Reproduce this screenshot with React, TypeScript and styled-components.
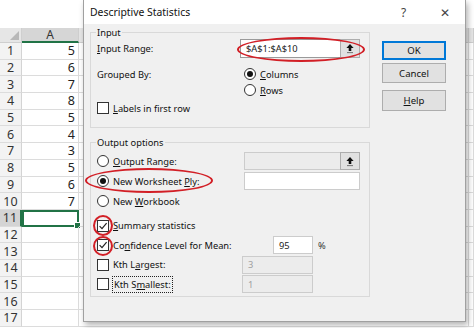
import React from 'react';
import styled, { createGlobalStyle, css } from 'styled-components';

const GlobalStyle = createGlobalStyle`
  html, body { margin: 0; padding: 0; background: #fff; }
  body { font-family: "Noto Sans", "Liberation Sans", sans-serif; }
`;

const GREEN = '#217346';
const RED = '#d21f26';

const Page = styled.div`
  position: relative;
  width: 474px;
  height: 328px;
  overflow: hidden;
  background: #fff;
`;

/* ---------- spreadsheet behind the dialog ---------- */

const Sheet = styled.div`
  padding-top: 28px;
  display: grid;
  grid-template-columns: 22px 57px 390px 1fr;
  grid-template-rows: 15px;
  grid-auto-rows: 16.7px;
  font-size: 12.5px;
  color: #222;
`;

const Corner = styled.div`
  position: relative;
  background: #e6e6e6;
  border-right: 1px solid #cfcfcf;
  border-bottom: 1px solid #cfcfcf;
  box-sizing: border-box;
  &::after {
    content: '';
    position: absolute;
    right: 2px;
    bottom: 2px;
    border-left: 9px solid transparent;
    border-bottom: 9px solid #b8b8b8;
  }
`;

const ColHead = styled.div<{ $active?: boolean }>`
  box-sizing: border-box;
  display: flex;
  align-items: center;
  justify-content: center;
  background: ${(p) => (p.$active ? '#d6d6d6' : '#e6e6e6')};
  border-right: 1px solid #cfcfcf;
  border-bottom: ${(p) => (p.$active ? `2px solid ${GREEN}` : '1px solid #cfcfcf')};
  color: #333;
  font-size: 12px;
`;

const RowHead = styled.div<{ $active?: boolean }>`
  box-sizing: border-box;
  display: flex;
  align-items: center;
  justify-content: center;
  background: ${(p) => (p.$active ? '#d4d4d4' : '#f3f3f3')};
  border-right: ${(p) => (p.$active ? `2px solid ${GREEN}` : '1px solid #d4d4d4')};
  border-bottom: 1px solid #dcdcdc;
  color: #333;
`;

const Cell = styled.div<{ $selected?: boolean }>`
  position: relative;
  box-sizing: border-box;
  display: flex;
  align-items: center;
  justify-content: flex-end;
  padding-right: 3px;
  border-right: 1px solid #dcdcdc;
  border-bottom: 1px solid #dcdcdc;
  ${(p) =>
    p.$selected &&
    css`
      outline: 2px solid ${GREEN};
      outline-offset: -2px;
      &::after {
        content: '';
        position: absolute;
        right: -3px;
        bottom: -3px;
        width: 5px;
        height: 5px;
        background: ${GREEN};
        border: 1px solid #fff;
      }
    `}
`;

/* ---------- dialog ---------- */

const Dialog = styled.div`
  position: absolute;
  left: 83px;
  top: 0;
  width: 383px;
  height: 322px;
  box-sizing: border-box;
  display: flex;
  flex-direction: column;
  background: #f0f0f0;
  border: 1px solid #a0a0a0;
  border-top: 0;
  box-shadow: 2px 3px 6px rgba(0, 0, 0, 0.3);
  font-size: 9.3px;
  color: #111;
`;

const TitleBar = styled.div`
  height: 24px;
  flex: none;
  display: flex;
  align-items: center;
  background: #fff;
  padding-left: 6px;
`;

const Title = styled.span`
  flex: 1;
  font-size: 10.4px;
  color: #111;
`;

const TitleButton = styled.span`
  width: 41px;
  text-align: center;
  font-size: 12px;
  color: #444;
`;

const Body = styled.div`
  flex: 1;
  display: flex;
  gap: 12px;
  padding: 8px 0 0 6px;
`;

const Groups = styled.div`
  width: 280px;
  display: flex;
  flex-direction: column;
  gap: 14px;
`;

const GroupBox = styled.div<{ $height: number }>`
  position: relative;
  box-sizing: border-box;
  height: ${(p) => p.$height}px;
  border: 1px solid #d9d9d9;
  display: flex;
  flex-direction: column;
`;

const Legend = styled.span`
  position: absolute;
  top: -7px;
  left: 5px;
  padding: 0 1px;
  background: #f0f0f0;
  line-height: 13px;
`;

const Row = styled.div<{ $top?: number; $height: number }>`
  display: flex;
  align-items: center;
  height: ${(p) => p.$height}px;
  margin-top: ${(p) => p.$top ?? 0}px;
  flex: none;
`;

const LabelCell = styled.div<{ $width: number }>`
  width: ${(p) => p.$width}px;
  flex: none;
  display: flex;
  align-items: center;
  padding-left: 6px;
  box-sizing: border-box;
  white-space: nowrap;
`;

const Text = styled.span<{ $focus?: boolean }>`
  margin-left: 4px;
  ${(p) =>
    p.$focus &&
    css`
      outline: 1px dotted #222;
      outline-offset: 1px;
      margin-left: 5px;
    `}
`;

const Box = styled.span`
  width: 12px;
  height: 12px;
  box-sizing: border-box;
  flex: none;
  display: flex;
  align-items: center;
  justify-content: center;
  background: #fff;
  border: 1px solid #333;
`;

const Circle = styled(Box)`
  border-radius: 50%;
`;

const Dot = styled.span`
  width: 6px;
  height: 6px;
  border-radius: 50%;
  background: #111;
`;

const Field = styled.div<{ $width: number; $height?: number; $disabled?: boolean; $strong?: boolean }>`
  width: ${(p) => p.$width}px;
  height: ${(p) => p.$height ?? 18}px;
  flex: none;
  box-sizing: border-box;
  display: flex;
  align-items: center;
  padding-left: 5px;
  background: ${(p) => (p.$disabled ? '#ececec' : '#fff')};
  border: 1px solid ${(p) => (p.$strong ? '#9a9a9a' : '#cccccc')};
  color: ${(p) => (p.$disabled ? '#a0a0a0' : '#222')};
`;

const FieldText = styled.span`
  flex: 1;
`;

const PickButton = styled.span`
  width: 18px;
  align-self: stretch;
  margin: -1px -1px -1px 0;
  display: flex;
  align-items: center;
  justify-content: center;
  background: #e1e1e1;
  border: 1px solid #adadad;
`;

const Percent = styled.span`
  margin-left: 5px;
  color: #333;
`;

const ButtonColumn = styled.div`
  width: 64px;
  display: flex;
  flex-direction: column;
  padding-top: 9px;
`;

const DialogButton = styled.div<{ $top?: number; $height: number; $default?: boolean }>`
  height: ${(p) => p.$height}px;
  margin-top: ${(p) => p.$top ?? 0}px;
  box-sizing: border-box;
  display: flex;
  align-items: center;
  justify-content: center;
  background: #e1e1e1;
  border: 1px solid ${(p) => (p.$default ? '#0078d7' : '#adadad')};
  box-shadow: ${(p) => (p.$default ? 'inset 0 0 0 1px #0078d7' : 'none')};
  font-size: 9.6px;
`;

/* ---------- red markup ---------- */

const Mark = styled.div<{ $x: number; $y: number; $w: number; $h: number }>`
  position: absolute;
  left: ${(p) => p.$x}px;
  top: ${(p) => p.$y}px;
  width: ${(p) => p.$w}px;
  height: ${(p) => p.$h}px;
  box-sizing: border-box;
  border: 2.5px solid ${RED};
  border-radius: 50%;
  pointer-events: none;
`;

const Check = () => (
  <svg width="10" height="10" viewBox="0 0 10 10">
    <path d="M1.6 5.2 L4 7.6 L8.6 2.2" fill="none" stroke="#222" strokeWidth="1.2" />
  </svg>
);

const UpArrow = () => (
  <svg width="10" height="11" viewBox="0 0 10 11">
    <path d="M5 1 L1.4 5 H3.7 V8 H6.3 V5 H8.6 Z" fill="#111" />
    <rect x="2" y="9.2" width="6" height="0.9" fill="#666" />
  </svg>
);

const Radio = ({ on }: { on?: boolean }) => <Circle>{on && <Dot />}</Circle>;
const CheckBox = ({ on }: { on?: boolean }) => <Box>{on && <Check />}</Box>;

const values = [5, 6, 7, 8, 5, 4, 3, 5, 6, 7];

export default function App() {
  const rows = Array.from({ length: 17 }, (_, i) => i + 1);
  return (
    <Page>
      <GlobalStyle />
      <Sheet>
        <Corner />
        <ColHead $active>A</ColHead>
        <ColHead />
        <ColHead />
        {rows.map((n) => (
          <React.Fragment key={n}>
            <RowHead $active={n === 11}>{n}</RowHead>
            <Cell $selected={n === 11}>{values[n - 1] ?? ''}</Cell>
            <Cell />
            <Cell />
          </React.Fragment>
        ))}
      </Sheet>

      <Dialog>
        <TitleBar>
          <Title>Descriptive Statistics</Title>
          <TitleButton>?</TitleButton>
          <TitleButton>✕</TitleButton>
        </TitleBar>
        <Body>
          <Groups>
            <GroupBox $height={96}>
              <Legend>Input</Legend>
              <Row $top={6} $height={19}>
                <LabelCell $width={149}>
                  <u>I</u>nput Range:
                </LabelCell>
                <Field $width={120} $height={19} $strong>
                  <FieldText>$A$1:$A$10</FieldText>
                  <PickButton>
                    <UpArrow />
                  </PickButton>
                </Field>
              </Row>
              <Row $top={8} $height={16}>
                <LabelCell $width={153}>Grouped By:</LabelCell>
                <Radio on />
                <Text>
                  <u>C</u>olumns
                </Text>
              </Row>
              <Row $height={16}>
                <LabelCell $width={153} />
                <Radio />
                <Text>
                  <u>R</u>ows
                </Text>
              </Row>
              <Row $top={2} $height={16}>
                <LabelCell $width={200}>
                  <CheckBox />
                  <Text>
                    <u>L</u>abels in first row
                  </Text>
                </LabelCell>
              </Row>
            </GroupBox>

            <GroupBox $height={155}>
              <Legend>Output options</Legend>
              <Row $top={8} $height={20}>
                <LabelCell $width={153}>
                  <Radio />
                  <Text>
                    <u>O</u>utput Range:
                  </Text>
                </LabelCell>
                <Field $width={116} $disabled>
                  <FieldText />
                  <PickButton>
                    <UpArrow />
                  </PickButton>
                </Field>
              </Row>
              <Row $height={20}>
                <LabelCell $width={153}>
                  <Radio on />
                  <Text>
                    New Worksheet <u>P</u>ly:
                  </Text>
                </LabelCell>
                <Field $width={116} />
              </Row>
              <Row $height={20}>
                <LabelCell $width={153}>
                  <Radio />
                  <Text>
                    New <u>W</u>orkbook
                  </Text>
                </LabelCell>
              </Row>
              <Row $top={5} $height={19.5}>
                <LabelCell $width={200}>
                  <CheckBox on />
                  <Text>
                    <u>S</u>ummary statistics
                  </Text>
                </LabelCell>
              </Row>
              <Row $height={19.5}>
                <LabelCell $width={182}>
                  <CheckBox on />
                  <Text>
                    Co<u>n</u>fidence Level for Mean:
                  </Text>
                </LabelCell>
                <Field $width={40}>95</Field>
                <Percent>%</Percent>
              </Row>
              <Row $height={19.5}>
                <LabelCell $width={151}>
                  <CheckBox />
                  <Text>
                    Kth L<u>a</u>rgest:
                  </Text>
                </LabelCell>
                <Field $width={71} $disabled>
                  3
                </Field>
              </Row>
              <Row $height={19.5}>
                <LabelCell $width={151}>
                  <CheckBox />
                  <Text $focus>
                    Kth S<u>m</u>allest:
                  </Text>
                </LabelCell>
                <Field $width={71} $disabled>
                  1
                </Field>
              </Row>
            </GroupBox>
          </Groups>

          <ButtonColumn>
            <DialogButton $height={19} $default>
              OK
            </DialogButton>
            <DialogButton $top={3} $height={20}>
              Cancel
            </DialogButton>
            <DialogButton $top={7} $height={21}>
              <span>
                <u>H</u>elp
              </span>
            </DialogButton>
          </ButtonColumn>
        </Body>
      </Dialog>

      <Mark $x={237} $y={37} $w={128} $h={25} />
      <Mark $x={85} $y={168} $w={128} $h={25} />
      <Mark $x={93} $y={215} $w={20} $h={21} />
      <Mark $x={93} $y={236} $w={20} $h={20} />
    </Page>
  );
}
